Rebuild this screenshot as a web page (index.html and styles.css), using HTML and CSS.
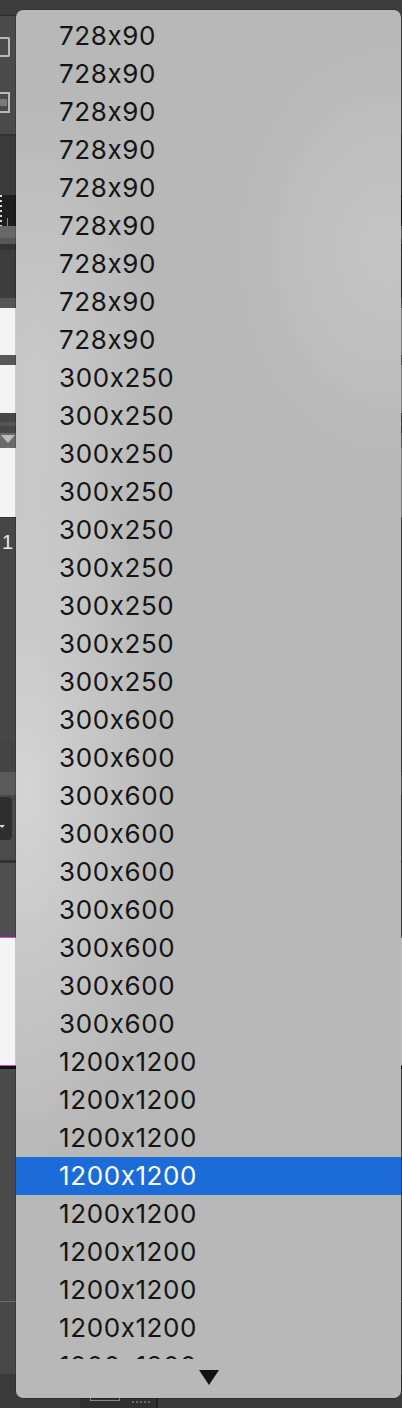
FILE: index.html
```html
<!DOCTYPE html>
<html>
<head>
<meta charset="utf-8">
<link rel="stylesheet" href="styles.css">
</head>
<body>
<div class="app">
  <div class="b topbar"></div>
  <div class="b tools">
    <div class="tool-icon t1"></div>
    <div class="tool-icon t2"><span class="t2fill"></span></div>
  </div>
  <div class="b sep1"></div>
  <div class="b dark1"></div>
  <div class="b film"><span class="film-line"></span></div>
  <div class="b g1"></div>
  <div class="b g2"></div>
  <div class="b g3"></div>
  <div class="b dark2"></div>
  <div class="b bar1"></div>
  <div class="b field f1"></div>
  <div class="b bar2"></div>
  <div class="b field f2"></div>
  <div class="b bar3"><span class="band"></span></div>
  <div class="b drop"><span class="drop-tri"></span></div>
  <div class="b field f3"></div>
  <div class="b numrow"><span class="num">1</span></div>
  <div class="b g4"></div>
  <div class="b g5"></div>
  <div class="b boxrow"><span class="box"><span class="box-tri"></span></span></div>
  <div class="b g6"></div>
  <div class="b line1"></div>
  <div class="b g7"></div>
  <div class="b canvas"></div>
  <div class="b blk"></div>
  <div class="b g8"></div>
  <div class="b line2"></div>
  <div class="b g9"></div>
  <div class="b footer">
    <span class="foot-panel">
      <span class="foot-rect"></span>
      <span class="foot-dots"></span>
    </span>
    <span class="foot-div"></span>
  </div>
</div>

<div class="menu">
  <div class="list">
    <div class="item">728x90</div>
    <div class="item">728x90</div>
    <div class="item">728x90</div>
    <div class="item">728x90</div>
    <div class="item">728x90</div>
    <div class="item">728x90</div>
    <div class="item">728x90</div>
    <div class="item">728x90</div>
    <div class="item">728x90</div>
    <div class="item">300x250</div>
    <div class="item">300x250</div>
    <div class="item">300x250</div>
    <div class="item">300x250</div>
    <div class="item">300x250</div>
    <div class="item">300x250</div>
    <div class="item">300x250</div>
    <div class="item">300x250</div>
    <div class="item">300x250</div>
    <div class="item">300x600</div>
    <div class="item">300x600</div>
    <div class="item">300x600</div>
    <div class="item">300x600</div>
    <div class="item">300x600</div>
    <div class="item">300x600</div>
    <div class="item">300x600</div>
    <div class="item">300x600</div>
    <div class="item">300x600</div>
    <div class="item">1200x1200</div>
    <div class="item">1200x1200</div>
    <div class="item">1200x1200</div>
    <div class="item selected">1200x1200</div>
    <div class="item">1200x1200</div>
    <div class="item">1200x1200</div>
    <div class="item">1200x1200</div>
    <div class="item">1200x1200</div>
    <div class="item">1200x1200</div>
  </div>
  <div class="scroll-arrow">
    <svg width="20" height="15" viewBox="0 0 20 15"><polygon points="0,0 20,0 10,15" fill="#111"/></svg>
  </div>
</div>
</body>
</html>
```

FILE: styles.css
```css
html, body {
  margin: 0;
  padding: 0;
}
body {
  width: 402px;
  height: 1408px;
  overflow: hidden;
  background: #3c3c3c;
  position: relative;
  font-family: Inter, "Liberation Sans", sans-serif;
}
.app {
  display: flex;
  flex-direction: column;
  width: 402px;
  height: 1408px;
}
.b { flex: none; width: 100%; position: relative; }
.topbar { height: 15px; background: #3d3d3d; border-bottom: 1px solid #2f2f2f; }
.tools {
  height: 118px;
  background: #4a4a4a;
  display: flex;
  flex-direction: column;
  padding-top: 21px;
  box-sizing: border-box;
}
.tool-icon { box-sizing: border-box; width: 10px; }
.t1 {
  height: 20px;
  border: 2px solid #b8b8b8;
  border-left: none;
  border-radius: 0 2px 2px 0;
}
.t2 {
  margin-top: 35px;
  height: 21px;
  border: 2px solid #b8b8b8;
  border-left: none;
  display: flex;
  align-items: center;
}
.t2fill { display: block; width: 7px; height: 7px; background: #7a7a7a; }
.sep1 { height: 2px; background: #333; }
.dark1 { height: 59px; background: #3a3a3a; }
.film {
  height: 31px;
  background: #1e1e1e;
  background-image: repeating-linear-gradient(to bottom, #d8d8d8 0 2px, #1e1e1e 2px 5px);
  background-size: 2px 100%;
  background-repeat: no-repeat;
}
.film-line { display: block; position: absolute; left: 7px; bottom: 0; width: 1px; height: 8px; background: #888; }
.g1 { height: 12px; background: #686868; }
.g2 { height: 6px; background: #575757; }
.g3 { height: 6px; background: #333; }
.dark2 { height: 48px; background: #3c3c3c; }
.bar1 { height: 10px; background: #555; }
.field { background: linear-gradient(to right, #f4f4f4, #e6e6e6); border-right: 1px solid #9a9a9a; box-sizing: border-box; }
.f1 { height: 47px; }
.bar2 { height: 10px; background: #585858; }
.f2 { height: 48px; }
.bar3 { height: 20px; background: #474747; }
.band { display: block; position: absolute; left: 0; right: 0; top: 9px; height: 4px; background: #555; }
.drop { height: 15px; background: #6a6a6a; }
.drop-tri {
  position: absolute; left: 1px; top: 2px;
  width: 0; height: 0;
  border-left: 7px solid transparent;
  border-right: 7px solid transparent;
  border-top: 8px solid #bdbdbd;
}
.f3 { height: 70px; border-bottom: 1px solid #333; }
.numrow { height: 222px; background: #464646; }
.num {
  position: absolute; left: 2px; top: 12px;
  color: #e8e8e8; font-size: 20px; line-height: 24px;
  font-family: "Liberation Sans", sans-serif;
}
.g4 { height: 32px; background: #444; }
.g5 { height: 23px; background: #5a5a5a; }
.boxrow { height: 48px; background: #4a4a4a; }
.box {
  position: absolute; left: -6px; top: 2px; width: 18px; height: 43px;
  background: #2e2e2e; border-radius: 4px;
}
.box-tri {
  position: absolute; right: 7px; top: 28px; width: 0; height: 0;
  border-left: 3px solid transparent; border-right: 3px solid transparent;
  border-top: 3px solid #ddd;
}
.g6 { height: 17px; background: #4b4b4b; }
.line1 { height: 3px; background: #333; }
.g7 { height: 74px; background: #505050; }
.canvas {
  height: 129px;
  background: linear-gradient(to right, #f5f5f5, #e9e9e9);
  border-top: 1px solid #e040e0;
  border-bottom: 1px solid #e040e0;
  box-sizing: border-box;
}
.blk { height: 3px; background: #111; }
.g8 { height: 232px; background: #4a4a4a; }
.line2 { height: 1px; background: #6a6a6a; }
.g9 { height: 72px; background: #484848; }
.footer { height: 35px; background: #3a3a3a; display: flex; }
.foot-panel {
  margin-left: 80px; margin-top: 23px; width: 76px; height: 12px;
  background: #303030; position: relative;
}
.foot-rect {
  position: absolute; left: 10px; top: 0; width: 30px; height: 4px;
  border: 1px solid #8a8a8a; border-top: none; box-sizing: border-box;
}
.foot-dots {
  position: absolute; left: 52px; top: 4px; width: 18px; height: 2px;
  background: repeating-linear-gradient(to right, #6a6a6a 0 2px, transparent 2px 4px);
}
.foot-div { margin-top: 23px; width: 2px; height: 12px; background: #222; }

/* popup menu (overlay) */
.menu {
  position: absolute;
  left: 16px;
  top: 10px;
  width: 385px;
  height: 1388px;
  border-radius: 7px;
  overflow: hidden;
  display: flex;
  flex-direction: column;
  background:
    radial-gradient(ellipse 140px 380px at 10px 780px, rgba(222,222,222,0.75), rgba(222,222,222,0) 100%),
    radial-gradient(ellipse 120px 300px at 20px 380px, rgba(215,215,215,0.6), rgba(215,215,215,0) 100%),
    radial-gradient(ellipse 160px 220px at 370px 240px, rgba(205,205,205,0.6), rgba(205,205,205,0) 100%),
    #b8b8b8;
  box-shadow: 0 0 0 0.5px rgba(0,0,0,0.35);
}
.list {
  flex: none;
  height: 1349px;
  padding-top: 7px;
  box-sizing: border-box;
  overflow: hidden;
}
.item {
  height: 38px;
  line-height: 38px;
  padding-left: 43px;
  font-size: 26px;
  letter-spacing: 0.6px;
  font-feature-settings: "calt" 0;
  color: #141414;
  white-space: nowrap;
}
.item.selected {
  background: #1b6cd9;
  color: #ffffff;
}
.scroll-arrow {
  flex: 1;
  display: flex;
  justify-content: center;
  align-items: flex-start;
  padding-top: 11px;
}
.scroll-arrow svg { display: block; }
```
